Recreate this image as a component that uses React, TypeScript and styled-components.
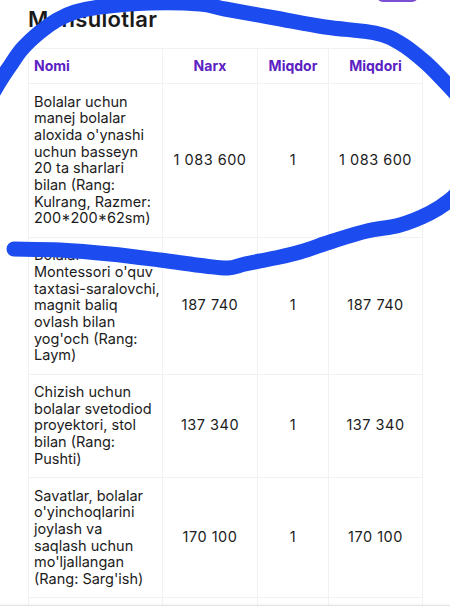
import React from "react";
import styled, { createGlobalStyle } from "styled-components";

const GlobalStyle = createGlobalStyle`
  html, body {
    margin: 0;
    padding: 0;
    background: #ffffff;
  }
  body {
    font-family: Inter, "Noto Sans", "Liberation Sans", sans-serif;
    color: #1c1c1c;
    overflow: hidden;
  }
`;

const Page = styled.div`
  position: relative;
  width: 450px;
  height: 612px;
  overflow: hidden;
  padding: 0 28px;
  box-sizing: border-box;
`;

const TopBar = styled.div`
  display: flex;
  justify-content: flex-end;
  height: 2px;
  padding-right: 4px;
`;

const TopButton = styled.div`
  width: 41px;
  height: 30px;
  margin-top: -28px;
  border-radius: 6px;
  background: #7a4fd3;
`;

const Title = styled.h1`
  margin: 5px 0 0;
  font-size: 22px;
  line-height: 25px;
  font-weight: 600;
  letter-spacing: 0.3px;
  color: #1a1a1a;
`;

const Table = styled.table`
  margin-top: 16px;
  width: 394px;
  border-collapse: collapse;
  table-layout: fixed;
`;

const HeadCell = styled.th<{ $align: "left" | "center" }>`
  padding: 9px 5px;
  font-size: 14px;
  line-height: 16px;
  font-weight: 700;
  color: #5b21c2;
  text-align: ${(p) => p.$align};
  border: 1px solid #f1f1f1;
`;

const NameCell = styled.td`
  padding: 9.5px 5px;
  font-size: 14.5px;
  line-height: 16.7px;
  white-space: pre;
  color: #1c1c1c;
  vertical-align: middle;
  border: 1px solid #f1f1f1;
`;

const NumCell = styled.td`
  padding: 9.5px 5px;
  font-size: 14.5px;
  line-height: 16.7px;
  letter-spacing: 0.5px;
  text-align: center;
  color: #1c1c1c;
  vertical-align: middle;
  border: 1px solid #f1f1f1;
  white-space: nowrap;
`;

const SpacerRow = styled.tr`
  height: 30px;
`;

const SpacerCell = styled.td`
  border: 1px solid #f1f1f1;
`;

const Footer = styled.div`
  position: absolute;
  left: 0;
  right: 0;
  bottom: 0;
  height: 6px;
  background: #ffffff;
  border-top: 1px solid #e4e4e4;
  box-shadow: 0 -1px 2px rgba(0, 0, 0, 0.04);
`;

const Scribble = styled.svg`
  position: absolute;
  left: 0;
  top: 0;
  width: 450px;
  height: 612px;
  pointer-events: none;
`;

type Pt = [number, number];

function smooth(pts: Pt[]): string {
  const f = (n: number) => n.toFixed(1);
  let d = `M${f(pts[0][0])} ${f(pts[0][1])}`;
  for (let i = 0; i < pts.length - 1; i++) {
    const p0 = pts[i - 1] || pts[i];
    const p1 = pts[i];
    const p2 = pts[i + 1];
    const p3 = pts[i + 2] || p2;
    const c1: Pt = [p1[0] + (p2[0] - p0[0]) / 6, p1[1] + (p2[1] - p0[1]) / 6];
    const c2: Pt = [p2[0] - (p3[0] - p1[0]) / 6, p2[1] - (p3[1] - p1[1]) / 6];
    d += ` C${f(c1[0])} ${f(c1[1])} ${f(c2[0])} ${f(c2[1])} ${f(p2[0])} ${f(p2[1])}`;
  }
  return d;
}

const upperArc: Pt[] = [
  [-10, 98],
  [0, 81],
  [10, 66],
  [22, 49],
  [40, 32],
  [57, 20],
  [75, 12],
  [100, 7],
  [150, 3],
  [200, 4],
  [225, 9],
  [275, 18],
  [325, 27],
  [375, 33],
  [400, 43],
  [425, 62],
  [445, 82],
  [458, 96],
];

const lowerArc: Pt[] = [
  [14, 249],
  [60, 250],
  [110, 254],
  [160, 260],
  [205, 266],
  [228, 268],
  [245, 264],
  [275, 258],
  [300, 252],
  [333, 241],
  [367, 231],
  [400, 225],
  [430, 213],
  [450, 200],
  [462, 188],
];

type Item = { name: string; price: string; qty: number };

const items: Item[] = [
  {
    name:
      "Bolalar uchun\nmanej bolalar\naloxida o'ynashi\nuchun basseyn\n20 ta sharlari\nbilan (Rang:\nKulrang, Razmer:\n200*200*62sm)",
    price: "1 083 600",
    qty: 1,
  },
  {
    name:
      "Bolalar\nMontessori o'quv\ntaxtasi-saralovchi,\nmagnit baliq\novlash bilan\nyog'och (Rang:\nLaym)",
    price: "187 740",
    qty: 1,
  },
  {
    name: "Chizish uchun\nbolalar svetodiod\nproyektori, stol\nbilan (Rang:\nPushti)",
    price: "137 340",
    qty: 1,
  },
  {
    name:
      "Savatlar, bolalar\no'yinchoqlarini\njoylash va\nsaqlash uchun\nmo'ljallangan\n(Rang: Sarg'ish)",
    price: "170 100",
    qty: 1,
  },
];

export default function App() {
  return (
    <>
      <GlobalStyle />
      <Page>
        <TopBar>
          <TopButton />
        </TopBar>
        <Title>Mahsulotlar</Title>
        <Table>
          <colgroup>
            <col style={{ width: 134 }} />
            <col style={{ width: 95 }} />
            <col style={{ width: 71 }} />
            <col style={{ width: 94 }} />
          </colgroup>
          <thead>
            <tr>
              <HeadCell $align="left">Nomi</HeadCell>
              <HeadCell $align="center">Narx</HeadCell>
              <HeadCell $align="center">Miqdor</HeadCell>
              <HeadCell $align="center">Miqdori</HeadCell>
            </tr>
          </thead>
          <tbody>
            {items.map((it, i) => (
              <tr key={i}>
                <NameCell>{it.name}</NameCell>
                <NumCell>{it.price}</NumCell>
                <NumCell>{it.qty}</NumCell>
                <NumCell>{it.price}</NumCell>
              </tr>
            ))}
            <SpacerRow>
              <SpacerCell />
              <SpacerCell />
              <SpacerCell />
              <SpacerCell />
            </SpacerRow>
          </tbody>
        </Table>
        <Footer />
        <Scribble viewBox="0 0 450 612">
          <path
            d={smooth(upperArc)}
            fill="none"
            stroke="#1c4cf0"
            strokeWidth={15}
            strokeLinecap="round"
            strokeLinejoin="round"
          />
          <path
            d={smooth(lowerArc)}
            fill="none"
            stroke="#1c4cf0"
            strokeWidth={15}
            strokeLinecap="round"
            strokeLinejoin="round"
          />
        </Scribble>
      </Page>
    </>
  );
}
